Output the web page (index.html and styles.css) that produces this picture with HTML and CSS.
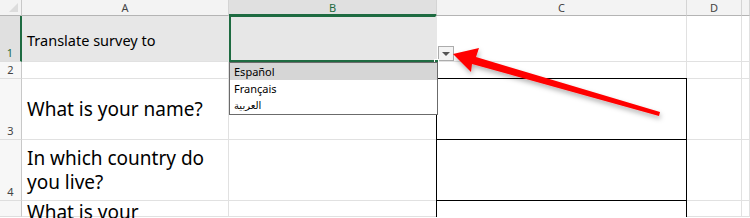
FILE: index.html
```html
<!DOCTYPE html>
<html lang="en">
<head>
    <meta charset="UTF-8">
    <title>Translate survey</title>
    <link rel="stylesheet" href="styles.css">
</head>
<body>
    <div class="sheet">
        <div class="grid">
            <!-- column headers -->
            <div class="corner"><span class="corner-tri"></span></div>
            <div class="colhead">A</div>
            <div class="colhead active">B</div>
            <div class="colhead">C</div>
            <div class="colhead">D</div>
            <div class="colhead"></div>

            <!-- row 1 -->
            <div class="rowhead active">1</div>
            <div class="cell fill label">Translate survey to</div>
            <div class="cell fill selected"></div>
            <div class="cell"></div>
            <div class="cell"></div>
            <div class="cell"></div>

            <!-- row 2 -->
            <div class="rowhead">2</div>
            <div class="cell"></div>
            <div class="cell"></div>
            <div class="cell"></div>
            <div class="cell"></div>
            <div class="cell"></div>

            <!-- row 3 -->
            <div class="rowhead">3</div>
            <div class="cell question">What is your name?</div>
            <div class="cell"></div>
            <div class="cell answer first"></div>
            <div class="cell"></div>
            <div class="cell"></div>

            <!-- row 4 -->
            <div class="rowhead">4</div>
            <div class="cell question">In which country do<br>you live?</div>
            <div class="cell"></div>
            <div class="cell answer"></div>
            <div class="cell"></div>
            <div class="cell"></div>

            <!-- row 5 -->
            <div class="rowhead"></div>
            <div class="cell question top">What is your</div>
            <div class="cell"></div>
            <div class="cell answer last"></div>
            <div class="cell"></div>
            <div class="cell"></div>
        </div>

        <div class="dd-button"><span class="dd-caret"></span></div>
        <div class="handle"></div>

        <ul class="dropdown">
            <li class="current">Español</li>
            <li>Français</li>
            <li class="arabic"><span dir="rtl">العربية</span></li>
        </ul>

        <svg class="arrow" width="750" height="218" viewBox="0 0 750 218">
            <defs>
                <filter id="shadow" x="-10%" y="-30%" width="130%" height="180%">
                    <feDropShadow dx="1" dy="3" stdDeviation="2.5" flood-color="#000" flood-opacity="0.3"/>
                </filter>
            </defs>
            <polygon filter="url(#shadow)" fill="#ff0000"
                points="453,54 479,48 476,57 660,112 659,116 472,64 471,72"/>
        </svg>
    </div>
</body>
</html>
```

FILE: styles.css
```css
* {
    margin: 0;
    padding: 0;
    box-sizing: border-box;
}

body {
    background: #fff;
    font-family: 'Noto Sans', 'Open Sans', sans-serif;
    color: #000;
    overflow: hidden;
}

.sheet {
    position: relative;
    width: 750px;
    height: 218px;
    overflow: hidden;
}

.grid {
    display: grid;
    grid-template-columns: 22px 207px 208px 250px 55px 8px;
    grid-template-rows: 16px 46px 17px 61px 61px 16px;
}

.corner {
    background: #f3f3f3;
    border-right: 1px solid #c8c8c8;
    border-bottom: 1px solid #b4b4b4;
    position: relative;
}

.corner-tri {
    position: absolute;
    right: 3px;
    bottom: 3px;
    width: 0;
    height: 0;
    border-left: 9px solid transparent;
    border-bottom: 9px solid #dcdcdc;
}

.colhead {
    background: #f3f3f3;
    border-right: 1px solid #d4d4d4;
    border-bottom: 1px solid #b4b4b4;
    font-size: 11px;
    color: #444;
    text-align: center;
    line-height: 15px;
}

.colhead.active {
    background: #e0e0e0;
    color: #1e6b41;
    border-bottom: 2px solid #1e6b41;
}

.rowhead {
    background: #f7f7f7;
    border-right: 1px solid #c8c8c8;
    border-bottom: 1px solid #dedede;
    font-size: 11px;
    color: #444;
    display: flex;
    align-items: flex-end;
    justify-content: center;
    padding-bottom: 1px;
}

.rowhead.active {
    background: #e0e0e0;
    color: #1e6b41;
    border-right: 2px solid #1e6b41;
}

.cell {
    border-right: 1px solid #e1e1e1;
    border-bottom: 1px solid #e1e1e1;
    white-space: nowrap;
}

.cell.fill {
    background: #e7e7e7;
    border-right-color: #e7e7e7;
}

.label {
    font-size: 14.5px;
    display: flex;
    align-items: center;
    padding-left: 5px;
    padding-top: 2px;
}

.selected {
    border: 2px solid #1e6b41;
    margin-top: -1px;
}

.question {
    font-size: 19px;
    line-height: 24px;
    display: flex;
    align-items: center;
    padding-left: 5px;
}

.question.top {
    align-items: flex-start;
    line-height: 20px;
    padding-top: 1px;
}

.answer {
    border-left: 1px solid #000;
    border-right: 1px solid #000;
    border-bottom: 1px solid #000;
    margin-left: -1px;
}

.answer.first {
    border-top: 1px solid #000;
    margin-top: -1px;
}

.answer.last {
    border-bottom: none;
}

.dd-button {
    position: absolute;
    left: 438px;
    top: 46px;
    width: 16px;
    height: 15px;
    background: #f4f4f4;
    border: 1px solid #acacac;
    display: flex;
    align-items: center;
    justify-content: center;
}

.dd-caret {
    width: 0;
    height: 0;
    border-left: 4px solid transparent;
    border-right: 4px solid transparent;
    border-top: 4px solid #555;
}

.handle {
    position: absolute;
    left: 434px;
    top: 59px;
    width: 5px;
    height: 5px;
    background: #1e6b41;
    border: 1px solid #fff;
}

.dropdown {
    position: absolute;
    left: 229px;
    top: 62px;
    width: 209px;
    height: 53px;
    list-style: none;
    background: #fff;
    border: 1px solid #6b6b6b;
    font-size: 11px;
}

.dropdown li {
    height: 17px;
    line-height: 17px;
    padding-left: 4px;
}

.dropdown li.current {
    background: #d6d6d6;
}

.dropdown li.arabic {
    text-align: left;
    font-family: 'DejaVu Sans', 'Noto Sans', sans-serif;
    font-size: 10px;
}

.arrow {
    position: absolute;
    left: 0;
    top: 0;
    pointer-events: none;
}
```
